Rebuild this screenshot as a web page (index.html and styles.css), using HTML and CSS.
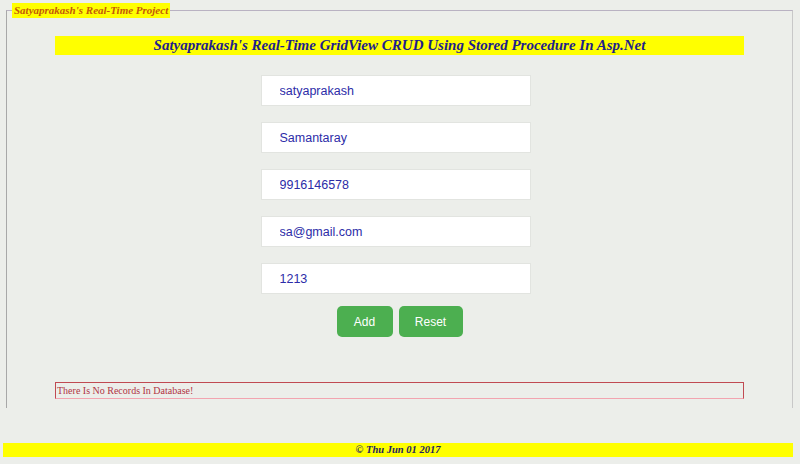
FILE: index.html
```html
<!DOCTYPE html>
<html>
<head>
<meta charset="utf-8">
<title>Satyaprakash's Real-Time Project</title>
<link rel="stylesheet" href="styles.css">
</head>
<body>
<fieldset class="panel">
  <legend class="panel-legend">Satyaprakash's Real-Time Project</legend>
  <div class="content">
    <h1 class="banner">Satyaprakash's Real-Time GridView CRUD Using Stored Procedure In Asp.Net</h1>
    <form class="form">
      <input class="field" type="text" value="satyaprakash">
      <input class="field" type="text" value="Samantaray">
      <input class="field" type="text" value="9916146578">
      <input class="field" type="text" value="sa@gmail.com">
      <input class="field" type="text" value="1213">
      <div class="actions">
        <button type="button" class="btn btn-add">Add</button>
        <button type="button" class="btn btn-reset">Reset</button>
      </div>
    </form>
    <div class="message">There Is No Records In Database!</div>
  </div>
</fieldset>
<footer class="footer">© Thu Jun 01 2017</footer>
</body>
</html>
```

FILE: styles.css
```css
html, body {
  margin: 0;
  padding: 0;
}
body {
  background: #eceeea;
  font-family: "Liberation Serif", "Times New Roman", serif;
  width: 800px;
  height: 464px;
  overflow: hidden;
}
.panel {
  margin: 3px 7px 0 6px;
  padding: 0 0 9px 0;
  border: 1px solid #b9b2c2;
  border-left-color: #a8a8a8;
  border-right-color: #c8c8c8;
  border-bottom: none;
  min-width: 0;
}
.panel-legend {
  margin-left: 5px;
  padding: 0 2px;
  background: #ffff00;
  color: #c45a08;
  font-style: italic;
  font-weight: bold;
  font-size: 11px;
  line-height: 15px;
}
.content {
  margin: 18px 48px 0 48px;
}
.banner {
  margin: 0;
  background: #ffff00;
  color: #1e1e8c;
  font-size: 15px;
  font-style: italic;
  font-weight: bold;
  line-height: 19px;
  text-align: center;
}
.form {
  display: flex;
  flex-direction: column;
  align-items: center;
  gap: 16px;
  margin-top: 20px;
  padding-right: 8px;
}
.field {
  box-sizing: border-box;
  width: 270px;
  height: 31px;
  margin: 0;
  padding: 0 0 0 18px;
  border: 1px solid #e2e4e0;
  background: #ffffff;
  color: #2c2ca8;
  font-family: "Liberation Sans", Arial, sans-serif;
  font-size: 12.5px;
}
.actions {
  display: flex;
  gap: 6px;
  margin-top: -4px;
  margin-left: 8px;
}
.btn {
  height: 31px;
  border: none;
  border-radius: 5px;
  background: #4caf50;
  color: #ffffff;
  font-family: "Liberation Sans", Arial, sans-serif;
  font-size: 12px;
  padding: 0;
}
.btn-add { width: 56px; }
.btn-reset { width: 64px; }
.message {
  margin-top: 45px;
  box-sizing: border-box;
  height: 17px;
  border: 1px solid #c04a52;
  border-bottom-color: #f2a4b0;
  color: #b03444;
  font-size: 10px;
  line-height: 15px;
  padding-left: 1px;
}
.footer {
  margin: 35px 7px 0 3px;
  height: 14px;
  background: #ffff00;
  color: #1e1e60;
  font-style: italic;
  font-weight: bold;
  font-size: 10.5px;
  line-height: 14px;
  text-align: center;
}
```
